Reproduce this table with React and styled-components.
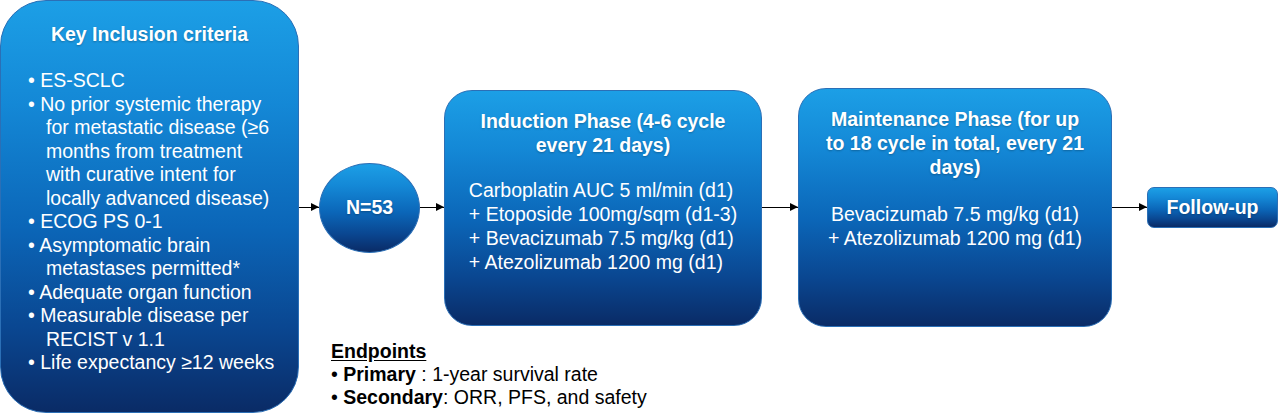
import React from "react";
import styled, { createGlobalStyle } from "styled-components";

const GlobalStyle = createGlobalStyle`
  html, body {
    margin: 0;
    padding: 0;
    background: #fff;
    font-family: "Liberation Sans", Arial, sans-serif;
  }
  #root {
    width: 1280px;
    height: 415px;
    overflow: hidden;
  }
`;

const blueFill = `
  background: linear-gradient(180deg, #1c9fe6 0%, #1488d6 25%, #0b66b8 55%, #0a4690 80%, #0a2b66 100%);
  border: 1px solid #2b6fb6;
  box-sizing: border-box;
  color: #fff;
`;

const Page = styled.div`
  display: flex;
  width: 1280px;
  height: 415px;
`;

const CriteriaBox = styled.div`
  ${blueFill}
  width: 299px;
  height: 413px;
  border-radius: 46px;
  padding-top: 21px;
  flex-shrink: 0;
`;

const Title = styled.div`
  font-weight: bold;
  font-size: 19.5px;
  line-height: 24px;
  text-align: center;
  white-space: nowrap;
  text-shadow: 0 1px 2px rgba(0, 0, 0, 0.25);
`;

const Bullets = styled.ul`
  list-style: none;
  margin: 23px 0 0;
  padding: 0;
`;

const Bullet = styled.li`
  font-size: 19.5px;
  line-height: 23.5px;
  padding-left: 45px;
  text-indent: -18px;
  white-space: nowrap;
`;

const FlowColumn = styled.div`
  display: flex;
  flex-direction: column;
  padding-top: 88px;
`;

const FlowRow = styled.div`
  display: flex;
  align-items: center;
  height: 239px;
`;

const Arrow = styled.div`
  width: ${(p) => p.$w}px;
  height: 1.5px;
  background: #000;
  position: relative;
  flex-shrink: 0;

  &::after {
    content: "";
    position: absolute;
    right: 0;
    top: -3.5px;
    border-left: 8px solid #000;
    border-top: 4.25px solid transparent;
    border-bottom: 4.25px solid transparent;
  }
`;

const Circle = styled.div`
  ${blueFill}
  width: 101px;
  height: 90px;
  border-radius: 50%;
  display: flex;
  align-items: center;
  justify-content: center;
  font-weight: bold;
  font-size: 19.5px;
  text-shadow: 0 1px 2px rgba(0, 0, 0, 0.25);
  flex-shrink: 0;
`;

const PhaseBox = styled.div`
  ${blueFill}
  width: ${(p) => p.$w}px;
  height: ${(p) => p.$h}px;
  border-radius: 28px;
  padding-top: 18px;
  display: flex;
  flex-direction: column;
  align-items: center;
  flex-shrink: 0;
`;

const Dosing = styled.div`
  margin-top: ${(p) => p.$gap}px;
  font-size: 19.5px;
  line-height: 24px;
  white-space: nowrap;
  text-align: ${(p) => (p.$center ? "center" : "left")};
`;

const FollowUp = styled.div`
  ${blueFill}
  width: 131px;
  height: 41px;
  border-radius: 7px;
  display: flex;
  align-items: center;
  justify-content: center;
  font-weight: bold;
  font-size: 19.5px;
  text-shadow: 0 1px 2px rgba(0, 0, 0, 0.25);
  flex-shrink: 0;
`;

const Endpoints = styled.div`
  margin: 13px 0 0 32px;
  color: #000;
  font-size: 19.5px;
  line-height: 23px;
  white-space: nowrap;

  h4 {
    margin: 0;
    font-size: 19.5px;
    font-weight: bold;
    text-decoration: underline;
    text-underline-offset: 2px;
  }
  p {
    margin: 0;
  }
`;

const criteria = [
  ["ES-SCLC"],
  [
    "No prior systemic therapy",
    "for metastatic disease (≥6",
    "months from treatment",
    "with curative intent for",
    "locally advanced disease)",
  ],
  ["ECOG PS 0-1"],
  ["Asymptomatic brain", "metastases permitted*"],
  ["Adequate organ function"],
  ["Measurable disease per", "RECIST v 1.1"],
  ["Life expectancy ≥12 weeks"],
];

const App = () => {
  return (
    <Page>
      <GlobalStyle />
      <CriteriaBox>
        <Title>Key Inclusion criteria</Title>
        <Bullets>
          {criteria.map((lines, i) => (
            <Bullet key={i}>
              {"• "}
              {lines.map((line, j) => (
                <React.Fragment key={j}>
                  {j > 0 && <br />}
                  {line}
                </React.Fragment>
              ))}
            </Bullet>
          ))}
        </Bullets>
      </CriteriaBox>

      <FlowColumn>
        <FlowRow>
          <Arrow $w={20} />
          <Circle>N=53</Circle>
          <Arrow $w={24} />
          <PhaseBox $w={318} $h={236}>
            <Title>
              Induction Phase (4-6 cycle
              <br />
              every 21 days)
            </Title>
            <Dosing $gap={21}>
              Carboplatin AUC 5 ml/min (d1)
              <br />+ Etoposide 100mg/sqm (d1-3)
              <br />+ Bevacizumab 7.5 mg/kg (d1)
              <br />+ Atezolizumab 1200 mg (d1)
            </Dosing>
          </PhaseBox>
          <Arrow $w={36} />
          <PhaseBox $w={314} $h={239}>
            <Title>
              Maintenance Phase (for up
              <br />
              to 18 cycle in total, every 21
              <br />
              days)
            </Title>
            <Dosing $gap={23} $center>
              Bevacizumab 7.5 mg/kg (d1)
              <br />+ Atezolizumab 1200 mg (d1)
            </Dosing>
          </PhaseBox>
          <Arrow $w={35} />
          <FollowUp>Follow-up</FollowUp>
        </FlowRow>

        <Endpoints>
          <h4>Endpoints</h4>
          <p>
            • <b>Primary</b> : 1-year survival rate
          </p>
          <p>
            • <b>Secondary</b>: ORR, PFS, and safety
          </p>
        </Endpoints>
      </FlowColumn>
    </Page>
  );
};

export default App;
